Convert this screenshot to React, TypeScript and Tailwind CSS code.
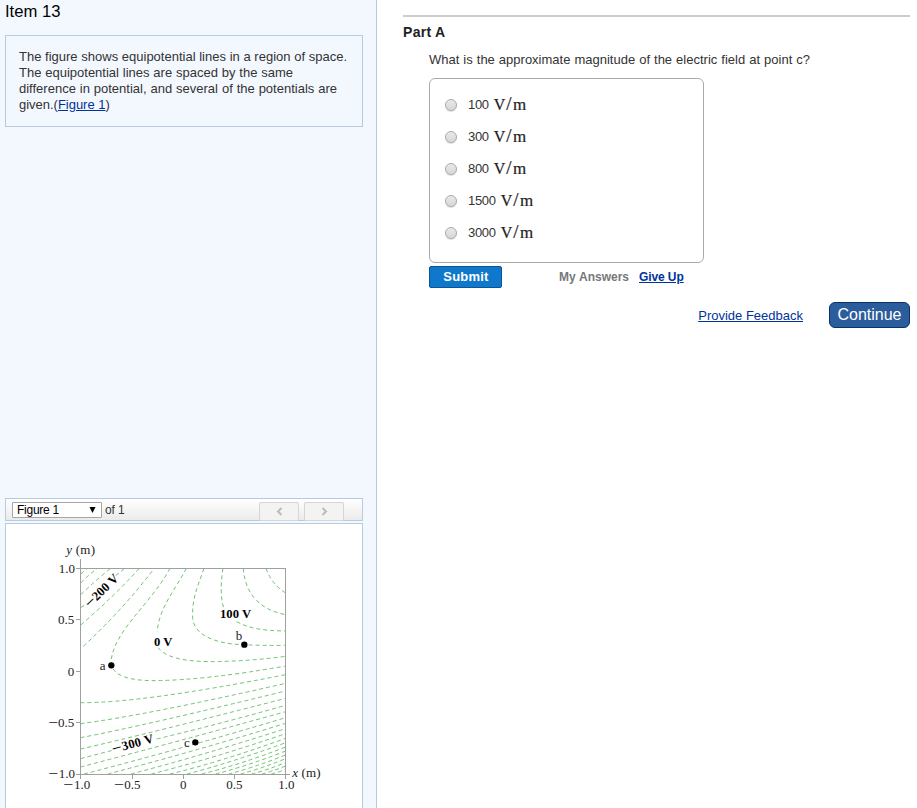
import React from "react";

const answers = ["100", "300", "800", "1500", "3000"];

const contours = [
  "M122 117 L142 100",
  "M122 144 Q148 118 172 100",
  "M122 179 Q168 135 212 100",
  "M122 218 L142 205 M227 122 L254 100",
  "M122 270 Q222 184 298 100",
  "M130 334 Q250 222 343 100",
  "M390 100 C335 205 215 292 213 385 C219 424 270 437 345 437 Q500 435 737 393",
  "M439 100 C405 166 356 220 352 290 M354 338 C385 377 465 379 510 380 Q625 379 737 364",
  "M492 100 C475 150 455 190 458 250 C463 306 540 328 613 329 Q670 332 737 331",
  "M549 100 C542 145 541 188 551 218 M590 260 C630 282 675 287 737 288",
  "M610 100 C615 181 665 226 737 239",
  "M678 100 Q694 147 737 174",
  "M122 503 Q300 505 737 419",
  "M122 566 Q320 540 737 445",
  "M122 608 Q320 570 737 468",
  "M122 642 Q320 597 737 490",
  "M122 671 Q170 658 218 646 M350 612 Q550 564 737 511",
  "M122 696 Q400 623 737 530",
  "M132 717 Q430 640 737 548",
  "M203 717 Q450 653 737 565",
  "M273 717 Q480 663 737 581",
  "M334 717 Q510 673 737 596",
  "M390 717 Q540 681 737 610",
  "M441 717 Q570 684 737 623",
  "M485 717 Q600 689 737 636",
  "M527 717 Q625 692 737 648",
  "M566 717 Q640 698 737 660",
  "M602 717 Q665 700 737 671",
  "M635 717 Q680 706 737 682",
  "M666 717 Q695 710 737 693",
  "M694 717 Q715 712 737 703",
];

function Minus({ x, y }: { x: number; y: number }) {
  return (
    <text x={x} y={y} textAnchor="start" textLength="30" lengthAdjust="spacingAndGlyphs">
      −
    </text>
  );
}

function Plot() {
  return (
    <svg
      className="ml-[34px] mt-[11px] h-[273px] w-[300px] shrink-0"
      viewBox="0 0 900 819"
      fontFamily="'Liberation Serif', serif"
      fontSize="39"
      fill="#222"
    >
      <g fill="none" stroke="#72c272" strokeWidth="3" strokeDasharray="12 9">
        {contours.map((d) => (
          <path key={d} d={d} />
        ))}
      </g>
      <g fill="none" stroke="#a0a0a0" strokeWidth="3" shapeRendering="crispEdges">
        <path d="M121.500 72V731M109 100.500H736.500V731M109 718.500H751M109 254.500H121M109 409.500H121M109 562.500H121M277.500 718V731M430.500 718V731M583.500 718V731" />
      </g>
      <g fill="#000">
        <circle cx="214" cy="391" r="9.500" />
        <circle cx="613" cy="329" r="9.500" />
        <circle cx="466" cy="622" r="9.500" />
      </g>
      <text x="79" y="56" textLength="86"><tspan fontStyle="italic">y</tspan> (m)</text>
      <text x="757" y="727" textLength="85"><tspan fontStyle="italic">x</tspan> (m)</text>
      <g textAnchor="end">
        <text x="105" y="113">1.0</text>
        <text x="103" y="267">0.5</text>
        <text x="103" y="422">0</text>
        <Minus x={24} y={575} />
        <text x="103" y="575">0.5</text>
        <Minus x={24} y={729} />
        <text x="105" y="729">1.0</text>
      </g>
      <g textAnchor="middle">
        <Minus x={69} y={763} />
        <text x="126" y="763">1.0</text>
        <Minus x={221} y={763} />
        <text x="277" y="763">0.5</text>
        <text x="430" y="763">0</text>
        <text x="583" y="763">0.5</text>
        <text x="739" y="763">1.0</text>
        <text x="188" y="405">a</text>
        <text x="597" y="315">b</text>
        <text x="441" y="635">c</text>
      </g>
      <g fontWeight="bold" fill="#000" fontSize="38">
        <text x="342" y="334">0 V</text>
        <text x="540" y="249">100 V</text>
        <g transform="translate(152 216) rotate(-44)">
          <Minus x={-5} y={0} />
          <text x="25" y="0" textLength="95">200 V</text>
        </g>
        <g transform="translate(222 654) rotate(-15)">
          <Minus x={-3} y={0} />
          <text x="28" y="0" textLength="97">300 V</text>
        </g>
      </g>
    </svg>
  );
}

function Arrow({ d }: { d: string }) {
  return (
    <button className="flex h-[19px] w-10 items-center justify-center rounded-[2px] border border-[#d6d6d6] bg-[#f3f3f3]">
      <svg className="h-[9px] w-[7px]" viewBox="0 0 7 9" fill="none" stroke="#bbb" strokeWidth="2">
        <path d={d} />
      </svg>
    </button>
  );
}

export default function App() {
  return (
    <div className="flex h-[808px] w-[917px] overflow-hidden bg-white font-['Liberation_Sans',Arial,sans-serif] text-[13px] leading-4 text-[#333]">
      <aside className="flex w-[377px] shrink-0 flex-col border-r border-[#b8c9dc] bg-[#f3f8ff] pl-[5px]">
        <h1 className="h-[35px] shrink-0 pt-[2px] text-base leading-5 text-black">
          <span className="inline-block origin-left scale-x-[1.04]">Item 13</span>
        </h1>
        <div className="h-[92px] w-[358px] shrink-0 border border-[#b8cade] pl-[13px] pt-[13px]">
          {[
            ["The figure shows equipotential lines in a region of space.", "w-[328px]"],
            ["The equipotential lines are spaced by the same", "w-[274px]"],
            ["difference in potential, and several of the potentials are", "w-[318px]"],
          ].map(([line, width]) => (
            <p key={line} className={`${width} h-4 whitespace-nowrap [text-align-last:justify]`}>{line}</p>
          ))}
          <p className="whitespace-nowrap tracking-[-0.02px]">given.(<a className="text-[#039] underline">Figure 1</a>)</p>
        </div>
        <div className="mt-[371px] flex h-[23px] w-[358px] shrink-0 border border-[#b8cade] bg-linear-to-b from-white to-[#ebebeb] pl-[6px] text-xs">
          <div className="mt-[3px] flex h-4 w-[90px] items-center justify-between rounded-[1px] border border-[#a6a6a6] bg-white pl-[4px] pr-[5px] text-black">
            <span className="tracking-[-0.25px]">Figure 1</span>
            <svg className="h-[6px] w-[7px]" viewBox="0 0 7 6"><path d="M0.500 0H6.500L3.500 6Z" /></svg>
          </div>
          <span className="ml-[3px] mt-[3px] tracking-[-0.15px]">of 1</span>
          <div className="ml-auto mr-[18px] mt-[3px] flex gap-[5px]">
            <Arrow d="M5.500 1L2 4.500L5.500 8" />
            <Arrow d="M1.500 1L5 4.500L1.500 8" />
          </div>
        </div>
        <div className="mt-[2px] flex h-[290px] w-[358px] shrink-0 border border-[#b8cade] bg-white">
          <Plot />
        </div>
      </aside>
      <main className="w-[540px] pl-[26px] pt-[15px]">
        <div className="h-[2px] w-[507px] bg-[#ccc]" />
        <h2 className="mt-[7px] text-[14px] font-bold tracking-[0.3px] text-[#222]">Part A</h2>
        <div className="ml-[26px]">
          <p className="mt-[12px] w-[381px] whitespace-nowrap [text-align-last:justify]">What is the approximate magnitude of the electric field at point c?</p>
          <div className="mt-[10px] h-[185px] w-[275px] rounded-[6px] border border-[#aaa] pl-[15px] pt-[9px]">
            {answers.map((value) => (
              <label key={value} className="flex h-8 items-center">
                <span className="mt-[2px] h-3 w-3 rounded-full border border-[#aaa] bg-linear-to-b from-[#e9e9e9] to-[#d8d8d8] shadow-[0_1px_1px_#ddd]" />
                <span className="ml-[11px] mt-[2px] text-[13px] tracking-[-0.3px]">{value}</span>
                <span className="mb-[2px] ml-[5px] flex items-baseline font-['Liberation_Serif',serif] text-[16px] text-[#222] [-webkit-text-stroke:0.2px_#222]">
                  V<span className="px-[1px] text-[19px] leading-none">/</span><span className="inline-block origin-left scale-x-[1.06]">m</span>
                </span>
              </label>
            ))}
          </div>
          <div className="mt-[3px] flex h-[22px] items-center font-bold">
            <button className="h-[22px] w-[73px] rounded-[2px] border border-[#0a5595] bg-[#0f78cb] pl-px leading-5 tracking-[0.2px] text-white">Submit</button>
            <span className="ml-[57px] w-[70px] whitespace-nowrap text-[12px] text-[#777] [text-align-last:justify]">My Answers</span>
            <a className="ml-[10px] whitespace-nowrap text-[12px] tracking-[-0.1px] text-[#039] underline">Give Up</a>
          </div>
        </div>
        <div className="mt-[14px] flex w-[507px] items-center justify-end">
          <a className="mr-[26px] mt-[2px] whitespace-nowrap text-[#039] underline">Provide Feedback</a>
          <button className="h-[26px] w-[81px] rounded-[6px] border border-[#073365] bg-[#2b5c9c] text-[16px] leading-[24px] text-white">Continue</button>
        </div>
      </main>
    </div>
  );
}
